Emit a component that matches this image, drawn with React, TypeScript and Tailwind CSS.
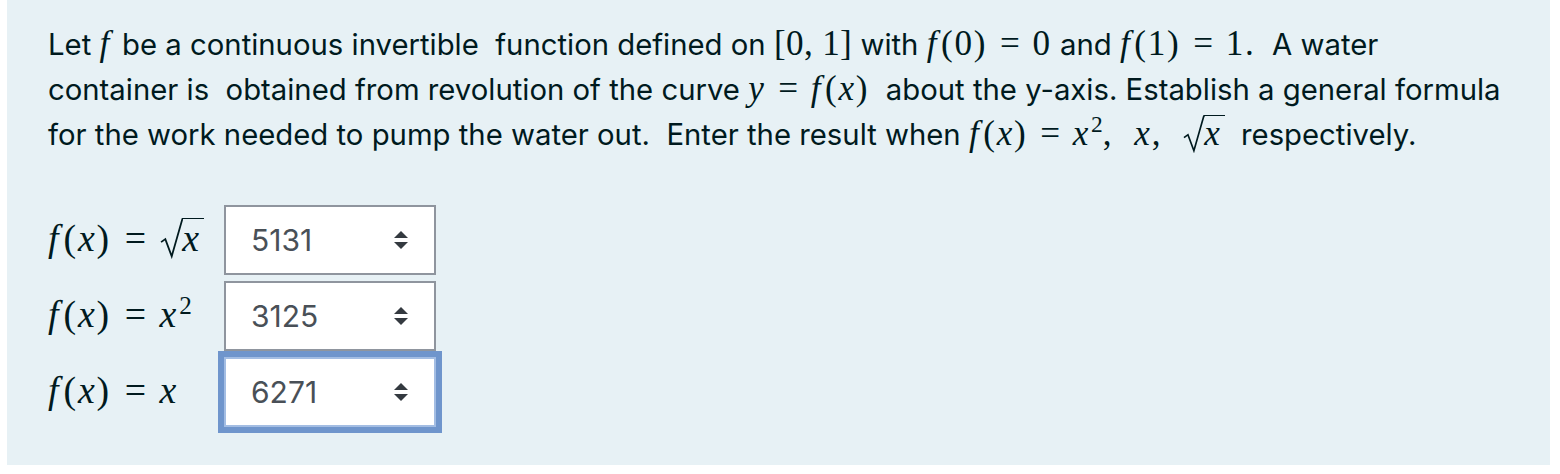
import React from "react";

const sans = "font-['Inter','Liberation_Sans',sans-serif]";
const serif = "font-['Liberation_Serif','DejaVu_Serif',serif]";

// math runs are sized against the surrounding text, so labels (bigger parent) come out larger
function I({ children, r }: { children: React.ReactNode; r?: boolean }) {
  return (
    <span className={`${serif} italic text-[1.2em] leading-none tracking-[0.05em] ${r ? "mr-[0.08em]" : ""}`}>
      {children}
    </span>
  );
}

function R({ children, tight }: { children: React.ReactNode; tight?: boolean }) {
  return (
    <span className={`${serif} text-[1.2em] leading-none ${tight ? "tracking-[0.01em]" : "tracking-[0.05em]"}`}>
      {children}
    </span>
  );
}

function Eq() {
  return <span className={`${serif} text-[1.2em] leading-none mx-[0.36em]`}>=</span>;
}

function Sup({ children }: { children: React.ReactNode }) {
  return <sup className={`${serif} text-[0.8em] ml-[0.04em] -top-[0.55em]`}>{children}</sup>;
}

function Sqrt({ children }: { children: React.ReactNode }) {
  return (
    <span className={`${serif} text-[1.2em] relative inline-block pl-[0.6em] leading-none`}>
      <svg
        className="absolute left-0 top-0 h-full w-[0.62em]"
        viewBox="0 0 22 40"
        preserveAspectRatio="none"
      >
        <path d="M1 24 L5 21 L11 38 L21 1 L22 1" fill="none" stroke="#001a1e" strokeWidth="1.7" />
      </svg>
      <span className="inline-block border-t-[1.7px] border-[#001a1e] italic leading-[1.04em] pr-[0.08em] tracking-[0.05em]">
        {children}
      </span>
    </span>
  );
}

function Fx() {
  return (
    <>
      <I r>f</I>
      <R>(</R>
      <I>x</I>
      <R>)</R>
    </>
  );
}

function Arrows() {
  return (
    <svg
      width="16"
      height="20"
      viewBox="0 0 16 20"
      className="absolute right-[27px] top-1/2 -translate-y-1/2 pointer-events-none"
    >
      <path d="M8 1 L15 8 L1 8 Z" fill="#343a40" />
      <path d="M1 12 L15 12 L8 19 Z" fill="#343a40" />
    </svg>
  );
}

function Answer({ value, focused }: { value: string; focused?: boolean }) {
  return (
    <div className="relative">
      <select
        defaultValue={value}
        className={`${sans} appearance-none w-[212px] h-[70px] bg-white pl-[25px] text-[30px] text-[#495057] outline-none ${
          focused
            ? "border-2 border-[#a3bde3] shadow-[0_0_0_6px_#6f95cc]"
            : "border-2 border-[#8f959e]"
        }`}
      >
        <option>{value}</option>
      </select>
      <Arrows />
    </div>
  );
}

export default function App() {
  return (
    <div className="w-[1560px] h-[474px] bg-white">
      <div className={`ml-[7px] w-[1543px] h-[465px] bg-[#e7f1f5] text-[#001a1e] ${sans}`}>
        <div className="pl-[41px] pt-[22px] text-[29.3px] leading-[45px]">
          <div className="whitespace-nowrap h-[45px]">
            Let <I r>f</I> be a continuous invertible&nbsp; function defined on <R tight>[0, 1]</R> with{" "}
            <I r>f</I>
            <R>(0)</R>
            <Eq />
            <R>0</R> and <I r>f</I>
            <R>(1)</R>
            <Eq />
            <R>1.</R>&nbsp; A water
          </div>
          <div className="whitespace-nowrap h-[45px]">
            container is&nbsp; obtained from revolution of the curve <I>y</I>
            <Eq />
            <Fx />
            &nbsp; about the y-axis. Establish a general formula
          </div>
          <div className="whitespace-nowrap h-[45px]">
            for the work needed to pump the water out.&nbsp; Enter the result when <Fx />
            <Eq />
            <I>x</I>
            <Sup>2</Sup>
            <R>,</R>
            <span className="inline-block w-[21px]" />
            <I>x</I>
            <R>,</R>
            <span className="inline-block w-[21px]" />
            <Sqrt>x</Sqrt>&nbsp; respectively.
          </div>
        </div>

        <div className="pl-[41px] mt-[48px] flex flex-col gap-[6px] text-[31.5px]">
          <div className="flex items-center">
            <div className="w-[176px] whitespace-nowrap">
              <Fx />
              <Eq />
              <Sqrt>x</Sqrt>
            </div>
            <Answer value="5131" />
          </div>
          <div className="flex items-center">
            <div className="w-[176px] whitespace-nowrap">
              <Fx />
              <Eq />
              <I>x</I>
              <Sup>2</Sup>
            </div>
            <Answer value="3125" />
          </div>
          <div className="flex items-center">
            <div className="w-[176px] whitespace-nowrap">
              <Fx />
              <Eq />
              <I>x</I>
            </div>
            <Answer value="6271" focused />
          </div>
        </div>
      </div>
    </div>
  );
}
